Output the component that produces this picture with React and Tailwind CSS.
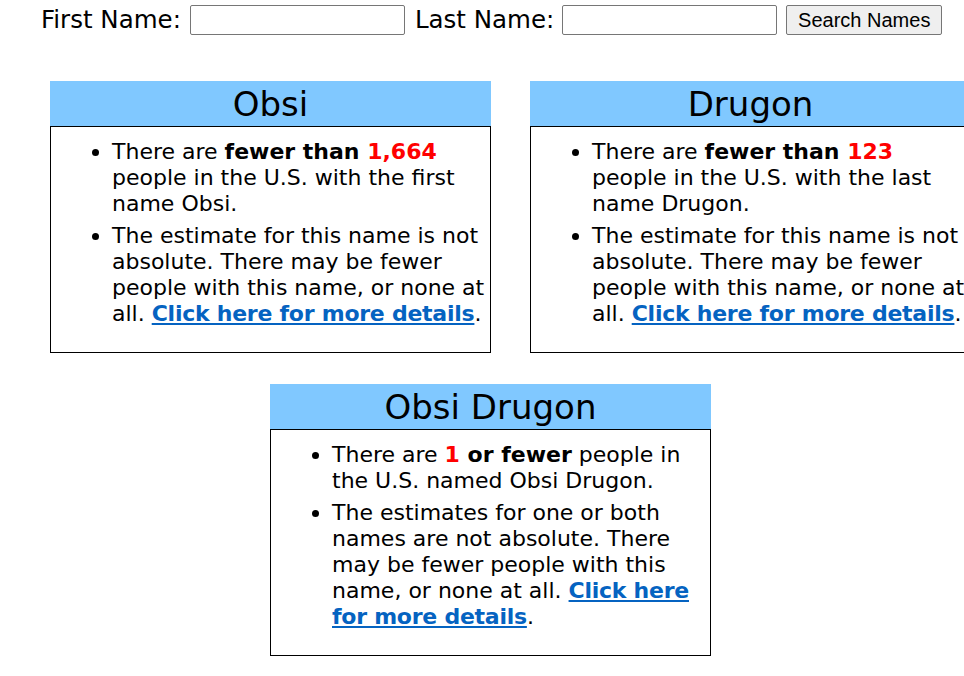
import React from 'react';

const NameCard = ({ title, children, className = '' }) => (
  <div className={`w-[441px] shrink-0 ${className}`}>
    <div className="h-[45px] bg-[#80c8ff] flex items-center justify-center text-[34px] leading-none text-black">
      {title}
    </div>
    <div className="h-[227px] border border-black pl-[21px] pr-0 pt-[12px] pb-[25px]">
      <ul className="list-disc pl-[40px] text-[22px] leading-[26px] text-black">{children}</ul>
    </div>
  </div>
);

const MoreLink = ({ children }) => (
  <a href="#" className="font-bold text-[#0563c1] underline tracking-[-0.25px]">
    {children}
  </a>
);

export default function App() {
  return (
    <div className="w-[964px] h-[676px] overflow-hidden bg-white" style={{ fontFamily: '"DejaVu Sans", Verdana, sans-serif' }}>
      {/* search form */}
      <div className="flex items-center pl-[41px] pt-[5px] h-[35px]">
        <label className="text-[24.5px] leading-none text-black">First Name:</label>
        <input type="text" className="ml-[9px] w-[215px] h-[30px] border border-[#767676] rounded-[2px] bg-white" />
        <label className="ml-[10px] text-[24.5px] leading-none text-black">Last Name:</label>
        <input type="text" className="ml-[8px] w-[215px] h-[30px] border border-[#767676] rounded-[2px] bg-white" />
        <button
          className="ml-[9px] w-[156px] h-[30px] border border-[#767676] rounded-[2px] bg-[#efefef] text-[20px] leading-[26px] text-black"
          style={{ fontFamily: '"Liberation Sans", Arial, sans-serif' }}
        >
          Search Names
        </button>
      </div>

      {/* individual names */}
      <div className="flex gap-[39px] pl-[50px] mt-[46px]">
        <NameCard title="Obsi">
          <li>
            There are <b>fewer than <span className="text-[#ff0000]">1,664</span></b> people in the U.S. with the first name Obsi.
          </li>
          <li className="mt-[6px]">
            The estimate for this name is not absolute. There may be fewer people with this name, or none at all.{' '}
            <MoreLink>Click here for more details</MoreLink>.
          </li>
        </NameCard>
        <NameCard title="Drugon">
          <li>
            There are <b>fewer than <span className="text-[#ff0000]">123</span></b> people in the U.S. with the last name Drugon.
          </li>
          <li className="mt-[6px]">
            The estimate for this name is not absolute. There may be fewer people with this name, or none at all.{' '}
            <MoreLink>Click here for more details</MoreLink>.
          </li>
        </NameCard>
      </div>

      {/* full name */}
      <div className="pl-[270px] mt-[31px]">
        <NameCard title="Obsi Drugon">
          <li>
            There are <b><span className="text-[#ff0000]">1</span> or fewer</b> people in the U.S. named Obsi Drugon.
          </li>
          <li className="mt-[6px]">
            The estimates for one or both names are not absolute. There may be fewer people with this name, or none at all.{' '}
            <MoreLink>Click here for more details</MoreLink>.
          </li>
        </NameCard>
      </div>
    </div>
  );
}
